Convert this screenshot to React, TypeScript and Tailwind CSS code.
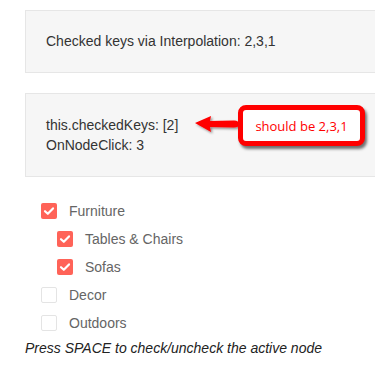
import React from 'react';

interface TreeNode {
  text: string;
  checked: boolean;
  level: number;
}

const nodes: TreeNode[] = [
  { text: 'Furniture', checked: true, level: 0 },
  { text: 'Tables & Chairs', checked: true, level: 1 },
  { text: 'Sofas', checked: true, level: 1 },
  { text: 'Decor', checked: false, level: 0 },
  { text: 'Outdoors', checked: false, level: 0 },
];

const Checkbox: React.FC<{ checked: boolean }> = ({ checked }) =>
  checked ? (
    <span className="flex h-4 w-4 shrink-0 items-center justify-center rounded-[2px] bg-[#ff6358]">
      <svg width="12" height="12" viewBox="0 0 12 12" fill="none">
        <path d="M2 6.2 L4.8 8.8 L10 3.4" stroke="#fff" strokeWidth="2.2" strokeLinecap="round" strokeLinejoin="round" />
      </svg>
    </span>
  ) : (
    <span className="h-4 w-4 shrink-0 rounded-[2px] border border-[#e4e4e4] bg-white" />
  );

const App: React.FC = () => {
  return (
    <div className="w-[375px] h-[375px] overflow-hidden bg-white pl-[25px] pt-[10px] text-[14px] font-['Liberation_Sans',Arial,sans-serif]">
      <div className="flex h-[63px] w-[370px] items-center border border-[#e6e6e6] bg-[#f6f6f6] px-[20px] text-[#333]">
        Checked keys via Interpolation: 2,3,1
      </div>

      <div className="relative mt-[20px] flex h-[84px] w-[370px] flex-col justify-center border border-[#e6e6e6] bg-[#f6f6f6] px-[20px] leading-[20px] text-[#333]">
        <div>this.checkedKeys: [2]</div>
        <div>OnNodeClick: 3</div>

        <svg className="absolute left-[168px] top-[21px]" width="48" height="22" viewBox="0 0 48 22">
          <defs>
            <filter id="sh" x="-20%" y="-40%" width="150%" height="200%">
              <feDropShadow dx="1.5" dy="1.5" stdDeviation="1" floodColor="#000" floodOpacity="0.45" />
            </filter>
          </defs>
          <g filter="url(#sh)">
            <path d="M1 8 L17 1 L16 6 L40 5.5 Q45 5.5 45 9 Q45 12.5 40 12.5 L16 12 L17 17 Z" fill="#ff0000" />
          </g>
        </svg>

        <div className="absolute left-[212px] top-[11px] flex h-[41px] w-[127px] items-center justify-center rounded-[8px] border-[5px] border-[#ff0000] bg-white shadow-[2px_3px_3px_rgba(0,0,0,0.55)]">
          <span className="text-[13px] text-[#ff0000] font-['Open_Sans',sans-serif]">should be 2,3,1</span>
        </div>
      </div>

      <div className="mt-[20px] pl-[16px]">
        {nodes.map((n) => (
          <div
            key={n.text}
            className={`flex h-[28px] items-center gap-[12px] text-[#656565] ${n.level === 1 ? 'pl-[16px]' : ''}`}
          >
            <Checkbox checked={n.checked} />
            <span>{n.text}</span>
          </div>
        ))}
      </div>

      <div className="mt-px leading-[20px] italic text-[#222]">Press SPACE to check/uncheck the active node</div>
    </div>
  );
};

export default App;
